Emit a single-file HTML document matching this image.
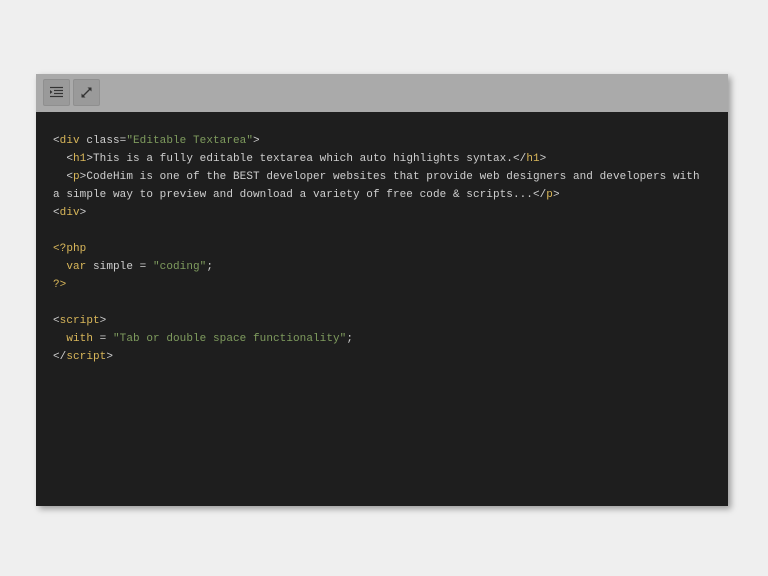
<!DOCTYPE html>
<html><head><meta charset="utf-8"><style>
html,body{margin:0;padding:0;background:#efefef;width:768px;height:576px;overflow:hidden}
.box{position:absolute;left:36px;top:74px;width:692px;height:432px;background:#1e1e1e;box-shadow:3px 3px 6px rgba(0,0,0,.35)}
.bar{height:38px;background:#aaaaaa;position:relative}
.btn{position:absolute;top:5px;width:25px;height:25px;background:#9a9a9a;border:1px solid #8f8f8f;border-radius:2px}
pre{margin:0;position:absolute;left:17px;top:58px;font:11px/18px "Liberation Mono",monospace;letter-spacing:0.065px;color:#cfcfcf}
.t{color:#d9b75a}.s{color:#7f9c5e}
</style></head><body>
<div class="box">
<div class="bar">
<div class="btn" style="left:7px"><svg width="25" height="25" viewBox="0 0 25 25"><g stroke="#333" stroke-width="1.2"><line x1="6" y1="7.5" x2="19" y2="7.5"/><line x1="10" y1="10.5" x2="19" y2="10.5"/><line x1="10" y1="13.5" x2="19" y2="13.5"/><line x1="6" y1="16.5" x2="19" y2="16.5"/></g><path d="M6 10 L8.5 12 L6 14Z" fill="#333"/></svg></div>
<div class="btn" style="left:37px"><svg width="25" height="25" viewBox="0 0 25 25"><g stroke="#333" stroke-width="1.3"><line x1="8" y1="17" x2="17" y2="8"/></g><path d="M13.5 7.5 L17.5 7.5 L17.5 11.5Z M7.5 13.5 L7.5 17.5 L11.5 17.5Z" fill="#333"/></svg></div>
</div>
<pre>&lt;<span class="t">div</span> class=<span class="s">"Editable Textarea"</span>&gt;
  &lt;<span class="t">h1</span>&gt;This is a fully editable textarea which auto highlights syntax.&lt;/<span class="t">h1</span>&gt;
  &lt;<span class="t">p</span>&gt;CodeHim is one of the BEST developer websites that provide web designers and developers with
a simple way to preview and download a variety of free code &amp; scripts...&lt;/<span class="t">p</span>&gt;
&lt;<span class="t">div</span>&gt;

<span class="t">&lt;?php</span>
  <span class="t">var</span> simple = <span class="s">"coding"</span>;
<span class="t">?&gt;</span>

&lt;<span class="t">script</span>&gt;
  <span class="t">with</span> = <span class="s">"Tab or double space functionality"</span>;
&lt;/<span class="t">script</span>&gt;</pre>
</div>
</body></html>
